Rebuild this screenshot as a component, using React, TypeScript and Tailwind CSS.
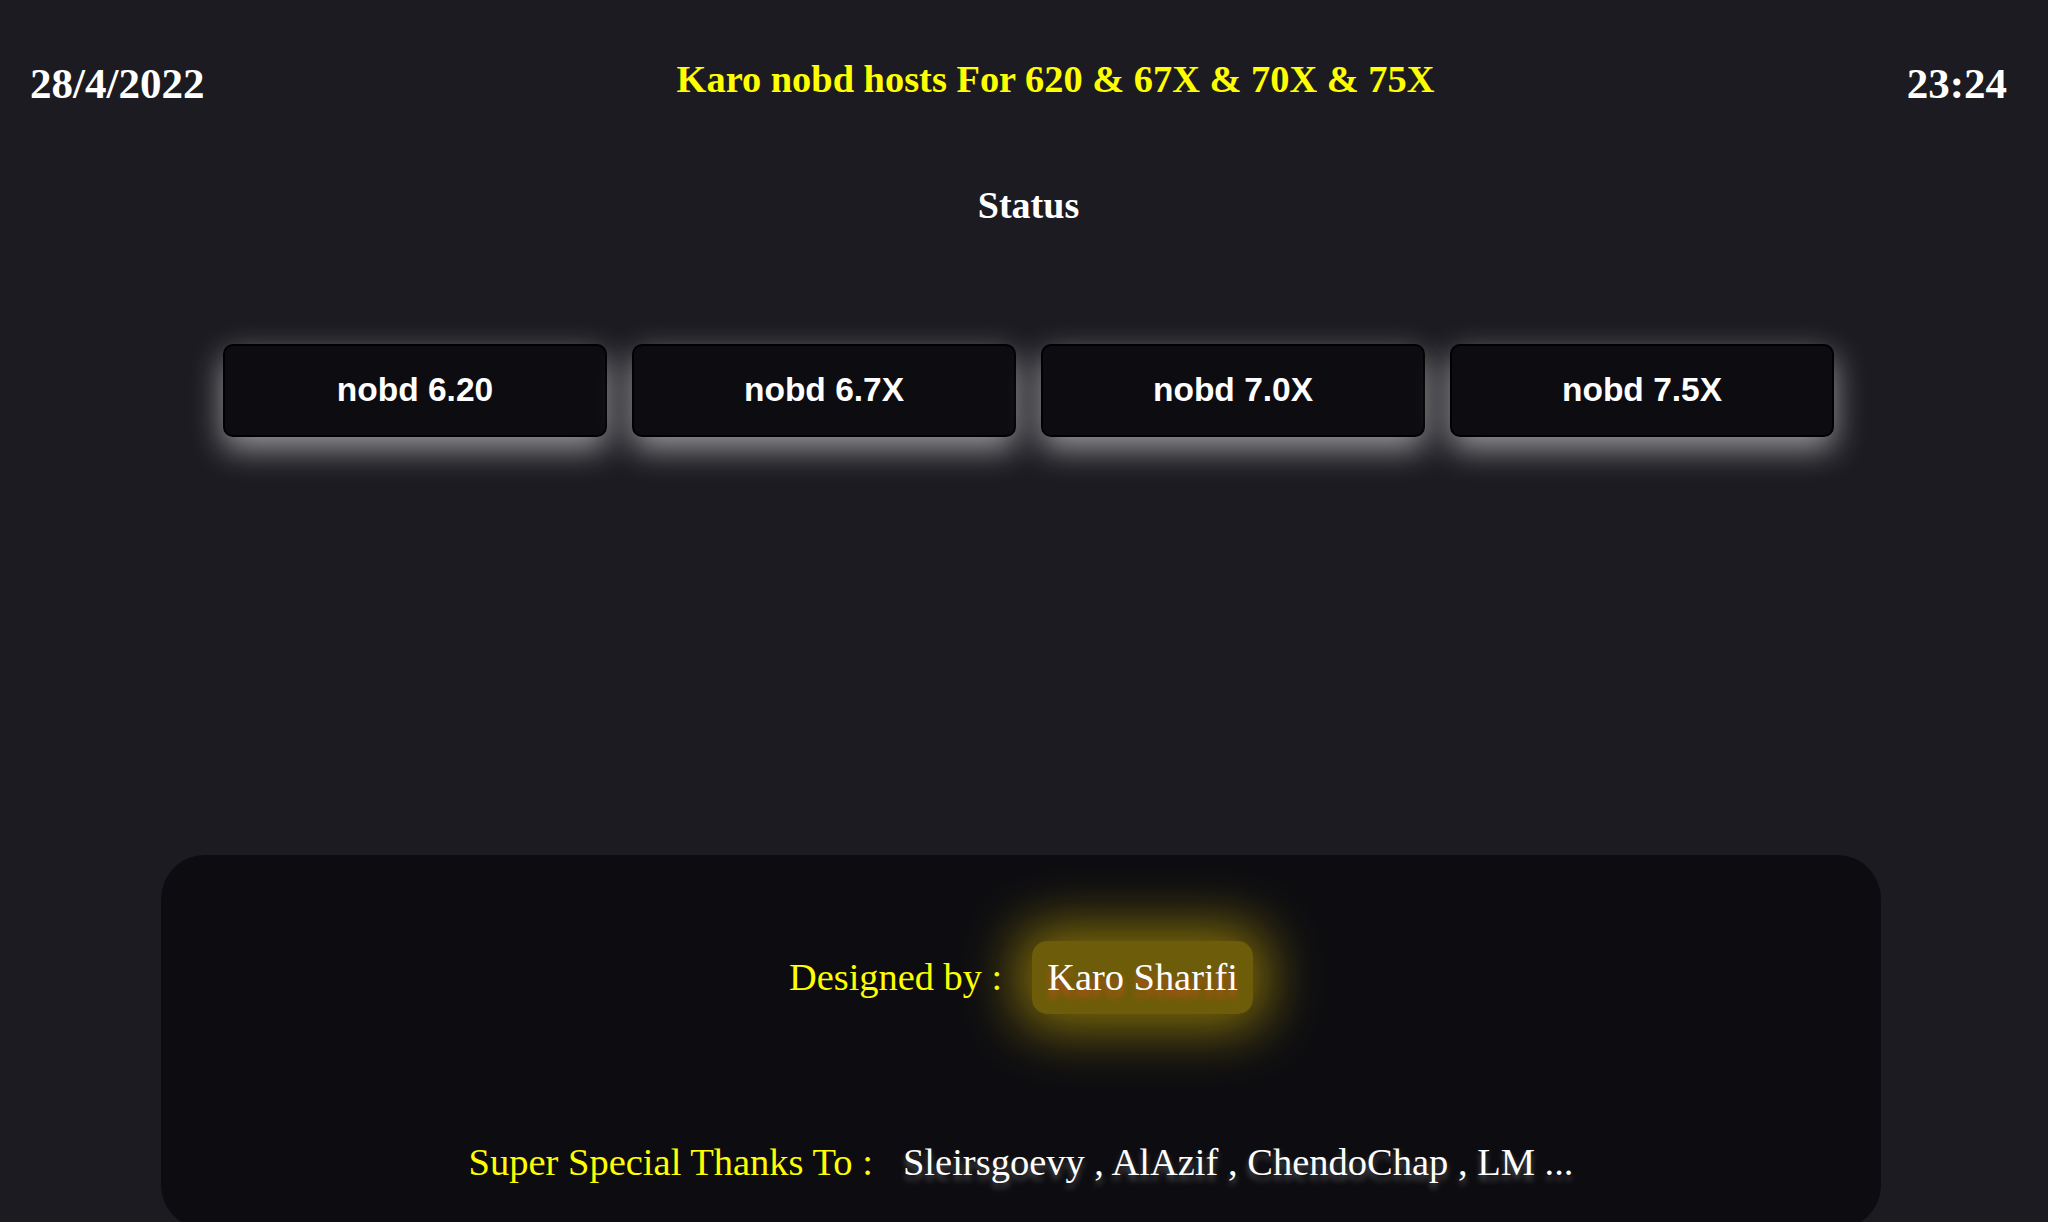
const versions = ["6.20", "6.7X", "7.0X", "7.5X"];

const friends = "Sleirsgoevy , AlAzif , ChendoChap , LM ...";

export default function App() {
  return (
    <div className="min-h-screen overflow-hidden bg-[#1c1b21] font-['Liberation_Serif','Times_New_Roman',serif] text-white">
      {/* Header: date / title / clock */}
      <header className="flex items-start justify-between pl-[30px] pr-[41px] pt-[57px]">
        <div className="mt-[2px] text-[43px] font-bold leading-[50px]">28/4/2022</div>
        <h1 className="text-[38.4px] font-bold leading-[44px] text-[#ffff00]">
          Karo nobd hosts For 620 &amp; 67X &amp; 70X &amp; 75X
        </h1>
        <div className="mt-[2px] text-[43px] font-bold leading-[50px]">23:24</div>
      </header>

      {/* Status + host buttons */}
      <section className="ml-[223px] w-[1611px]">
        <h2 className="mt-[74px] text-center text-[38px] font-bold leading-[44px]">
          Status
        </h2>
        <div className="mt-[117px] flex gap-[25px]">
          {versions.map((v) => (
            <button
              key={v}
              className="flex h-[93px] w-[384px] items-center justify-center rounded-[10px] border-2 border-black bg-[#0d0d11] font-['Liberation_Sans',Arial,sans-serif] text-[33.5px] font-bold text-white shadow-[0_12px_32px_rgba(255,255,255,0.55)]"
            >
              nobd {v}
            </button>
          ))}
        </div>
      </section>

      {/* Credits card */}
      <footer className="ml-[161px] mt-[418px] w-[1720px] rounded-[44px] bg-[#0d0d11] pb-[45px] pt-[86px]">
        <div className="flex items-center justify-center gap-[30px] text-[38.4px] leading-[43px]">
          <span className="text-[#ffff00]">Designed by :</span>
          <span className="rounded-[15px] bg-[rgba(255,215,0,0.4)] px-[15px] py-[15px] text-white shadow-[0_0_56px_14px_rgba(255,215,0,0.5)] [text-shadow:0_7px_6px_#c0501a]">
            Karo Sharifi
          </span>
        </div>
        <div className="mt-[126px] flex items-baseline justify-center gap-[30px] text-[38.5px] leading-[44px]">
          <span className="text-[#ffff00]">Super Special Thanks To :</span>
          <span className="text-white [text-shadow:0_5px_6px_rgba(255,255,255,0.3)]">
            {friends}
          </span>
        </div>
      </footer>
    </div>
  );
}
